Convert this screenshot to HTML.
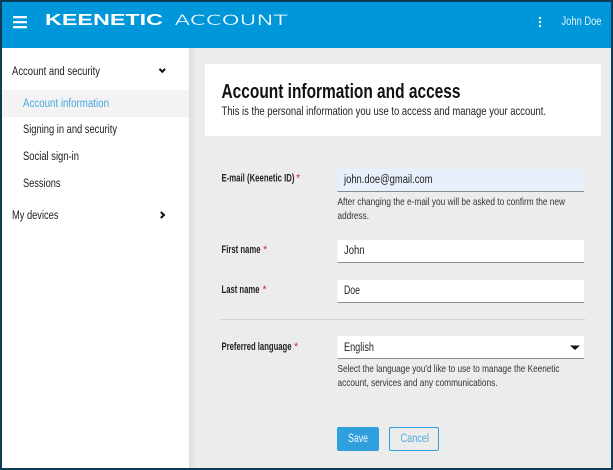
<!DOCTYPE html>
<html lang="en">
<head>
<meta charset="utf-8">
<title>Account information and access</title>
<style>
html,body{margin:0;padding:0;width:613px;height:470px;overflow:hidden;background:#0f3a55}
svg{display:block}
text{font-family:"Liberation Sans",sans-serif}
</style>
</head>
<body>
<svg width="613" height="470" viewBox="0 0 613 470" xmlns="http://www.w3.org/2000/svg">
<defs>
<linearGradient id="sh" x1="0" x2="1" y1="0" y2="0">
<stop offset="0" stop-color="#dedede"/>
<stop offset="1" stop-color="#ececec"/>
</linearGradient>
</defs>
<rect width="613" height="470" fill="#0f3a55"/>
<rect x="2" y="2" width="609" height="466" fill="#ececec"/>
<rect x="2" y="2" width="609" height="46" fill="#0096da"/>

<!-- hamburger -->
<rect x="13" y="16" width="14" height="2.300" fill="#f2f9fd"/>
<rect x="13" y="21" width="14" height="2.300" fill="#f2f9fd"/>
<rect x="13" y="26" width="14" height="2.300" fill="#f2f9fd"/>

<!-- logo -->
<text x="45" y="25" font-size="15.300" font-weight="700" fill="#fff" textLength="118" lengthAdjust="spacingAndGlyphs">KEENETIC</text>
<text x="174.500" y="24.800" font-size="14.500" style="font-family:'DejaVu Sans',sans-serif" fill="#fff" stroke="#0096da" stroke-width=".35" textLength="113" lengthAdjust="spacingAndGlyphs">ACCOUNT</text>

<!-- kebab + user -->
<circle cx="540" cy="18" r="1.200" fill="#fff"/>
<circle cx="540" cy="22" r="1.200" fill="#fff"/>
<circle cx="540" cy="26" r="1.200" fill="#fff"/>
<text x="561.500" y="25" font-size="11.500" fill="#e6f4fb" textLength="40" lengthAdjust="spacingAndGlyphs">John Doe</text>

<!-- sidebar -->
<rect x="189" y="48" width="8" height="420" fill="url(#sh)"/>
<rect x="2" y="48" width="187" height="420" fill="#fff"/>
<rect x="2" y="90" width="187" height="27" fill="#f3f3f3"/>
<g font-size="12.200" fill="#1c1c1c">
<text x="12" y="75" textLength="88" lengthAdjust="spacingAndGlyphs">Account and security</text>
<text x="23" y="107" fill="#45a8e0" textLength="86" lengthAdjust="spacingAndGlyphs">Account information</text>
<text x="23" y="133" textLength="94" lengthAdjust="spacingAndGlyphs">Signing in and security</text>
<text x="23" y="160" textLength="56" lengthAdjust="spacingAndGlyphs">Social sign-in</text>
<text x="23" y="187" textLength="37.500" lengthAdjust="spacingAndGlyphs">Sessions</text>
<text x="12" y="219" textLength="46.500" lengthAdjust="spacingAndGlyphs">My devices</text>
</g>
<path d="M159.500 68.800 L162.300 71.800 L165.100 68.800" fill="none" stroke="#111" stroke-width="2"/>
<path d="M160.800 212 L164 215 L160.800 218" fill="none" stroke="#111" stroke-width="2"/>

<!-- card -->
<rect x="205" y="64" width="396" height="72" fill="#fff"/>
<text x="221.500" y="98" font-size="20" font-weight="700" fill="#111" textLength="239" lengthAdjust="spacingAndGlyphs">Account information and access</text>
<text x="221.500" y="115" font-size="12.200" fill="#222" textLength="324.500" lengthAdjust="spacingAndGlyphs">This is the personal information you use to access and manage your account.</text>

<!-- labels -->
<g font-size="10.800" font-weight="700" fill="#222">
<text x="221.500" y="181.500" textLength="73" lengthAdjust="spacingAndGlyphs">E-mail (Keenetic ID)</text>
<text x="221.500" y="253" textLength="39" lengthAdjust="spacingAndGlyphs">First name</text>
<text x="221.500" y="293" textLength="38" lengthAdjust="spacingAndGlyphs">Last name</text>
<text x="221.500" y="350" textLength="70" lengthAdjust="spacingAndGlyphs">Preferred language</text>
</g>
<g font-size="11" fill="#d0312d">
<text x="296" y="181.500">*</text>
<text x="263" y="253">*</text>
<text x="262.500" y="293">*</text>
<text x="294" y="350">*</text>
</g>

<!-- inputs -->
<rect x="337.500" y="169" width="246.500" height="22" fill="#e8f0fd"/>
<rect x="337.500" y="191" width="246.500" height="1" fill="#8b8b8b"/>
<rect x="337.500" y="240" width="246.500" height="22" fill="#fff"/>
<rect x="337.500" y="262" width="246.500" height="1" fill="#8b8b8b"/>
<rect x="337.500" y="280" width="246.500" height="22" fill="#fff"/>
<rect x="337.500" y="302" width="246.500" height="1" fill="#8b8b8b"/>
<rect x="337.500" y="336" width="246.500" height="22" fill="#fff"/>
<rect x="337.500" y="358" width="246.500" height="1" fill="#8b8b8b"/>
<g font-size="12.300" fill="#222">
<text x="344" y="183" textLength="88.500" lengthAdjust="spacingAndGlyphs">john.doe@gmail.com</text>
<text x="344" y="254" textLength="20.500" lengthAdjust="spacingAndGlyphs">John</text>
<text x="344" y="294" textLength="16" lengthAdjust="spacingAndGlyphs">Doe</text>
<text x="344" y="351" textLength="30" lengthAdjust="spacingAndGlyphs">English</text>
</g>
<path d="M570 345.500 H580 L575 350 Z" fill="#111"/>

<!-- helper text -->
<g font-size="10.400" fill="#333">
<text x="337.500" y="205" textLength="227.500" lengthAdjust="spacingAndGlyphs">After changing the e-mail you will be asked to confirm the new</text>
<text x="337.500" y="219" textLength="31.500" lengthAdjust="spacingAndGlyphs">address.</text>
<text x="337.500" y="372" textLength="222" lengthAdjust="spacingAndGlyphs">Select the language you'd like to use to manage the Keenetic</text>
<text x="337.500" y="386" textLength="160" lengthAdjust="spacingAndGlyphs">account, services and any communications.</text>
</g>

<!-- divider -->
<rect x="221" y="319" width="364" height="1" fill="#d0d0d0"/>

<!-- buttons -->
<rect x="337" y="427" width="42" height="24" rx="2" fill="#2f9fdd"/>
<text x="348" y="442" font-size="12.200" fill="#eef8fd" textLength="20" lengthAdjust="spacingAndGlyphs">Save</text>
<rect x="389.500" y="427.500" width="49" height="23" rx="1.500" fill="none" stroke="#2f9fdd"/>
<text x="400.500" y="442" font-size="12.200" fill="#4fa9de" textLength="28.500" lengthAdjust="spacingAndGlyphs">Cancel</text>
</svg>
</body>
</html>
